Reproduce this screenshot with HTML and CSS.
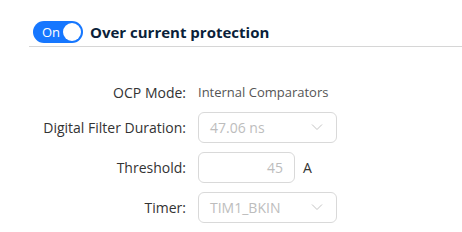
FILE: index.html
```html
<!DOCTYPE html>
<html>
<head>
<meta charset="utf-8">
<link rel="stylesheet" href="styles.css">
</head>
<body>
<div class="panel">
  <div class="header">
    <button class="switch"><span class="switch-text">On</span><span class="knob"></span></button>
    <h2 class="title">Over current protection</h2>
  </div>
  <div class="form">
    <div class="row row-text">
      <label class="label">OCP Mode:</label>
      <span class="value">Internal Comparators</span>
    </div>
    <div class="row">
      <label class="label">Digital Filter Duration:</label>
      <div class="select"><span>47.06 ns</span>
        <svg class="chev" width="12" height="8" viewBox="0 0 12 8"><path d="M1 1.5 L6 6.5 L11 1.5" fill="none" stroke="#c4c4c4" stroke-width="1"/></svg>
      </div>
    </div>
    <div class="row">
      <label class="label">Threshold:</label>
      <div class="input"><span>45</span></div>
      <span class="unit">A</span>
    </div>
    <div class="row">
      <label class="label">Timer:</label>
      <div class="select"><span>TIM1_BKIN</span>
        <svg class="chev" width="12" height="8" viewBox="0 0 12 8"><path d="M1 1.5 L6 6.5 L11 1.5" fill="none" stroke="#c4c4c4" stroke-width="1"/></svg>
      </div>
    </div>
  </div>
</div>
</body>
</html>
```
FILE: styles.css
```css
* { box-sizing: border-box; }
html, body { margin: 0; padding: 0; background: #fff; }
body { font-family: "Open Sans", "Noto Sans", sans-serif; font-size: 13px; color: #333; }
.panel { padding: 21px 0 0 29px; }
.header {
  display: flex; align-items: center; gap: 7px;
  padding-left: 4px; padding-bottom: 3px;
  border-bottom: 1px solid #d6d6d6;
}
.switch {
  display: flex; align-items: center; justify-content: space-between;
  width: 50px; height: 22px; border-radius: 11px; border: none;
  background: #1677ff; padding: 0 2px 0 9px; margin: 0;
  font-family: inherit;
}
.switch-text { color: #fff; font-size: 13px; line-height: 22px; }
.knob { width: 18px; height: 18px; border-radius: 50%; background: #fff; }
.title { margin: 0; font-size: 15px; font-weight: 700; color: #0b1f3a; line-height: 22px; }
.form { display: flex; flex-direction: column; gap: 8px; padding-top: 34px; }
.row { display: flex; align-items: center; height: 32px; }
.row-text { height: 22px; }
.label { width: 169px; text-align: right; padding-right: 12px; color: #333; font-size: 14px; }
.value { color: #555; }
.select, .input {
  display: flex; align-items: center; height: 31px;
  border: 1px solid #d9d9d9; border-radius: 6px; color: #bdbdbd;
  padding: 0 11px; font-size: 14px;
}
.select { width: 139px; justify-content: space-between; }
.chev { margin-right: 2px; }
.input { width: 97px; justify-content: flex-end; }
.unit { margin-left: 8px; color: #333; font-size: 14px; }
```
